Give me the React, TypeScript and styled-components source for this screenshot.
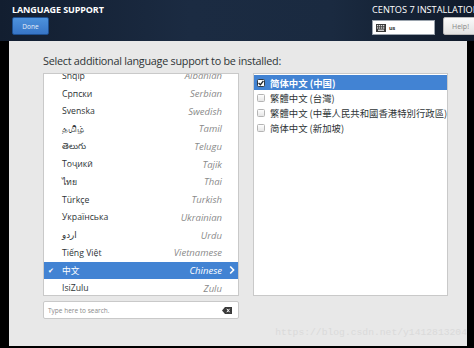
import React, { useState } from 'react';
import styled, { createGlobalStyle } from 'styled-components';

const languages = [
  { id: 1, native: 'Shqip', english: 'Albanian' },
  { id: 2, native: 'Српски', english: 'Serbian' },
  { id: 3, native: 'Svenska', english: 'Swedish' },
  { id: 4, native: 'தமிழ்', english: 'Tamil' },
  { id: 5, native: 'తెలుగు', english: 'Telugu' },
  { id: 6, native: 'Тоҷикӣ', english: 'Tajik' },
  { id: 7, native: 'ไทย', english: 'Thai' },
  { id: 8, native: 'Türkçe', english: 'Turkish' },
  { id: 9, native: 'Українська', english: 'Ukrainian' },
  { id: 10, native: 'اردو', english: 'Urdu' },
  { id: 11, native: 'Tiếng Việt', english: 'Vietnamese' },
  { id: 12, native: '中文', english: 'Chinese' },
  { id: 13, native: 'IsiZulu', english: 'Zulu' },
];

const locales = [
  { id: 1, name: '简体中文 (中国)' },
  { id: 2, name: '繁體中文 (台灣)' },
  { id: 3, name: '繁體中文 (中華人民共和國香港特別行政區)' },
  { id: 4, name: '简体中文 (新加坡)' },
];

const GlobalStyle = createGlobalStyle`
  html, body {
    margin: 0;
    padding: 0;
    background: #000;
  }
  body {
    font-family: 'Open Sans', 'Noto Sans CJK SC', sans-serif;
  }
`;

const Page = styled.div`
  width: 474px;
  height: 348px;
  display: flex;
  flex-direction: column;
  background: #000;
  overflow: hidden;
`;

const Header = styled.div`
  height: 41px;
  flex: 0 0 41px;
  display: flex;
  overflow: hidden;
  background: linear-gradient(90deg, #121e30 0%, #1b2b42 40%, #1a2a40 70%, #101a2a 100%);
`;

const HeaderLeft = styled.div`
  flex: 0 0 372px;
  padding-left: 12px;
  box-sizing: border-box;
  display: flex;
  flex-direction: column;
`;

const SpokeTitle = styled.div`
  margin-top: 4px;
  height: 12px;
  line-height: 12px;
  font-size: 9px;
  font-weight: 700;
  color: #fff;
  letter-spacing: -0.1px;
`;

const DoneButton = styled.button`
  margin-top: 1px;
  width: 37px;
  height: 18px;
  padding: 0;
  border: 1px solid #1d4f8f;
  border-radius: 2px;
  background: linear-gradient(#4d92dc, #3775c6);
  color: #e6effa;
  font-family: 'Open Sans', sans-serif;
  font-size: 6.5px;
`;

const HeaderRight = styled.div`
  flex: 0 0 auto;
  display: flex;
  flex-direction: column;
  white-space: nowrap;
`;

const Product = styled.div`
  margin-top: 4px;
  height: 12px;
  line-height: 12px;
  font-size: 9.2px;
  color: #fff;
`;

const HeaderControls = styled.div`
  display: flex;
  align-items: flex-start;
  gap: 8px;
  margin-top: 1px;
`;

const KeyboardBox = styled.div`
  margin-top: 3px;
  width: 63px;
  height: 15px;
  box-sizing: border-box;
  background: #fff;
  border: 1px solid #9aa3ad;
  display: flex;
  align-items: center;
  gap: 3px;
  padding-left: 3px;
  font-size: 5.5px;
  font-weight: 700;
  color: #333;
`;

const HelpButton = styled.button`
  width: 40px;
  height: 18px;
  padding: 0 0 0 8px;
  text-align: left;
  border: 1px solid #b8b8b8;
  border-radius: 2px;
  background: linear-gradient(#fafafa, #e2e2e2);
  color: #888;
  font-family: 'Open Sans', sans-serif;
  font-size: 7px;
`;

const Body = styled.div`
  flex: 1;
  display: flex;
  padding: 0 7px 2px 9px;
  background: #000;
`;

const Content = styled.div`
  flex: 1;
  position: relative;
  background: #e8e8e8;
  padding: 12px 0 0 34px;
  display: flex;
  flex-direction: column;
`;

const Prompt = styled.div`
  height: 15px;
  line-height: 15px;
  font-size: 10.8px;
  color: #2e3436;
  letter-spacing: -0.25px;
`;

const Panels = styled.div`
  margin-top: 5px;
  display: grid;
  grid-template-columns: 196px 195px;
  column-gap: 14px;
`;

const LeftColumn = styled.div`
  display: flex;
  flex-direction: column;
  gap: 5px;
`;

const ListBox = styled.div`
  height: 223px;
  box-sizing: border-box;
  background: #fff;
  border: 1px solid #c9c9c9;
  overflow: hidden;
`;

const ScrolledRows = styled.div`
  margin-top: -7px;
`;

const LangRow = styled.div<{ $selected: boolean }>`
  position: relative;
  height: 17.7px;
  display: flex;
  align-items: center;
  padding: 0 16px 0 18px;
  background: ${(p) => (p.$selected ? '#4283d3' : 'transparent')};
  color: ${(p) => (p.$selected ? '#fff' : '#2e3436')};
`;

const Native = styled.span`
  flex: 1;
  font-size: 8.7px;
  font-family: 'Open Sans', 'Noto Sans CJK SC', 'DejaVu Sans', sans-serif;
`;

const English = styled.span<{ $selected: boolean }>`
  font-size: 9.5px;
  font-style: italic;
  color: ${(p) => (p.$selected ? '#fff' : '#8a8a8a')};
`;

const CheckMark = styled.span`
  position: absolute;
  left: 4px;
  top: 50%;
  transform: translateY(-50%);
  font-size: 7px;
  color: #fff;
`;

const Chevron = styled.svg`
  position: absolute;
  right: 3px;
  top: 50%;
  transform: translateY(-50%);
`;

const SearchBox = styled.div`
  height: 18px;
  box-sizing: border-box;
  background: #fff;
  border: 1px solid #c9c9c9;
  border-radius: 2px;
  display: flex;
  align-items: center;
  justify-content: space-between;
  padding: 0 6px 0 4px;
`;

const Placeholder = styled.span`
  font-size: 6.5px;
  color: #8a8a8a;
`;

const LocaleBox = styled.div`
  height: 223px;
  box-sizing: border-box;
  background: #fff;
  border: 1px solid #c9c9c9;
  padding-top: 1px;
`;

const LocaleRow = styled.div<{ $selected: boolean }>`
  height: 15px;
  display: flex;
  align-items: center;
  gap: 5px;
  padding-left: 3px;
  font-family: 'Noto Sans CJK SC', 'Open Sans', sans-serif;
  font-size: 9.4px;
  white-space: nowrap;
  font-weight: ${(p) => (p.$selected ? 700 : 400)};
  background: ${(p) => (p.$selected ? '#4283d3' : 'transparent')};
  color: ${(p) => (p.$selected ? '#fff' : '#2e3436')};
`;

const Box = styled.span<{ $checked: boolean }>`
  flex: 0 0 8px;
  width: 8px;
  height: 8px;
  box-sizing: border-box;
  border: 1px solid ${(p) => (p.$checked ? '#2f3a45' : '#b4b4b4')};
  border-radius: 1.5px;
  background: ${(p) => (p.$checked ? '#fff' : 'linear-gradient(#fdfdfd, #e6e6e6)')};
  display: flex;
  align-items: center;
  justify-content: center;
`;

const Watermark = styled.div`
  position: absolute;
  right: 0;
  bottom: 8px;
  font-family: 'Liberation Mono', monospace;
  font-size: 9.7px;
  color: #dadada;
`;

function KeyboardIcon() {
  return (
    <svg width="10" height="8" viewBox="0 0 10 8">
      <rect x="0" y="0" width="10" height="8" fill="#3a3a3a" />
      {[1, 3, 5, 7].map((x) => (
        <rect key={`a${x}`} x={x} y="1" width="1.3" height="1.3" fill="#ddd" />
      ))}
      {[1, 3, 5, 7].map((x) => (
        <rect key={`b${x}`} x={x} y="3.3" width="1.3" height="1.3" fill="#ddd" />
      ))}
      <rect x="2" y="5.6" width="6" height="1.3" fill="#ddd" />
    </svg>
  );
}

export default function App() {
  const [checked] = useState<number[]>([1]);

  return (
    <Page>
      <GlobalStyle />
      <Header>
        <HeaderLeft>
          <SpokeTitle>LANGUAGE SUPPORT</SpokeTitle>
          <DoneButton>Done</DoneButton>
        </HeaderLeft>
        <HeaderRight>
          <Product>CENTOS 7 INSTALLATION</Product>
          <HeaderControls>
            <KeyboardBox>
              <KeyboardIcon />
              us
            </KeyboardBox>
            <HelpButton>Help!</HelpButton>
          </HeaderControls>
        </HeaderRight>
      </Header>
      <Body>
        <Content>
          <Prompt>Select additional language support to be installed:</Prompt>
          <Panels>
            <LeftColumn>
              <ListBox>
                <ScrolledRows>
                  {languages.map((lang) => {
                    const selected = lang.english === 'Chinese';
                    return (
                      <LangRow key={lang.id} $selected={selected}>
                        {selected && <CheckMark>✔</CheckMark>}
                        <Native>{lang.native}</Native>
                        <English $selected={selected}>{lang.english}</English>
                        {selected && (
                          <Chevron width="6" height="9" viewBox="0 0 6 9">
                            <path d="M1.2 1 L4.6 4.5 L1.2 8" stroke="#fff" strokeWidth="1.6" fill="none" />
                          </Chevron>
                        )}
                      </LangRow>
                    );
                  })}
                </ScrolledRows>
              </ListBox>
              <SearchBox>
                <Placeholder>Type here to search.</Placeholder>
                <svg width="10" height="7" viewBox="0 0 10 7">
                  <path d="M0 3.5 L3 0 H10 V7 H3 Z" fill="#3a3a3a" />
                  <path d="M4.8 1.8 L7.6 5.2 M7.6 1.8 L4.8 5.2" stroke="#fff" strokeWidth="1" />
                </svg>
              </SearchBox>
            </LeftColumn>
            <LocaleBox>
              {locales.map((loc) => {
                const isChecked = checked.includes(loc.id);
                return (
                  <LocaleRow key={loc.id} $selected={loc.id === 1}>
                    <Box $checked={isChecked}>
                      {isChecked && (
                        <svg width="6" height="6" viewBox="0 0 6 6">
                          <path d="M0.6 3 L2.4 4.8 L5.4 0.8" stroke="#1e252c" strokeWidth="1.4" fill="none" />
                        </svg>
                      )}
                    </Box>
                    {loc.name}
                  </LocaleRow>
                );
              })}
            </LocaleBox>
          </Panels>
          <Watermark>https://blog.csdn.net/y1412813204</Watermark>
        </Content>
      </Body>
    </Page>
  );
}
